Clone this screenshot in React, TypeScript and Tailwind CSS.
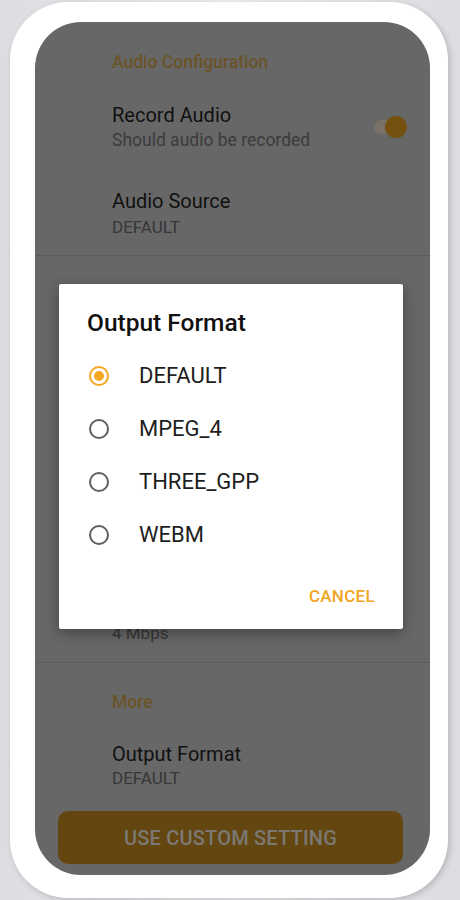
const options = ["DEFAULT", "MPEG_4", "THREE_GPP", "WEBM"];

const Radio = ({ checked }: { checked: boolean }) =>
  checked ? (
    <span className="flex items-center justify-center w-5 h-5 rounded-full border-2 border-[#f5a623]">
      <span className="w-[10px] h-[10px] rounded-full bg-[#f5a623]" />
    </span>
  ) : (
    <span className="w-5 h-5 rounded-full border-2 border-[#5f5f5f]" />
  );

const App = () => {
  return (
    <div className="w-[460px] h-[900px] bg-gradient-to-r from-[#dcdde1] via-[#eceef1] to-[#dcdde1] pt-[2px] pl-[10px] font-['Roboto',sans-serif]">
      <div className="w-[438px] h-[896px] bg-white rounded-[58px] pt-[20px] pl-[25px] pr-[18px] shadow-[2px_2px_6px_rgba(0,0,0,0.18)]">
        <div className="relative w-[395px] h-[853px] bg-[#676767] rounded-[46px] overflow-hidden">
          {/* settings list behind the scrim */}
          <div className="flex flex-col pt-[30px]">
            <p className="pl-[77px] text-[17.5px] leading-[20px] font-medium text-[#6a5427]">
              Audio Configuration
            </p>

            <div className="flex items-center justify-between mt-[31px] pl-[77px] pr-[22px]">
              <div className="flex flex-col">
                <p className="text-[20px] leading-[24px] text-[#111]">Record Audio</p>
                <p className="mt-[2px] text-[17.5px] leading-[22px] text-[#3b3b3b]">
                  Should audio be recorded
                </p>
              </div>
              <svg width="36" height="24" viewBox="0 0 36 24">
                <rect x="2" y="5" width="30" height="14" rx="7" fill="#7a7266" />
                <circle cx="24" cy="12" r="11" fill="#755110" />
              </svg>
            </div>

            <p className="mt-[38px] pl-[77px] text-[20px] leading-[24px] text-[#111]">Audio Source</p>
            <p className="mt-[4px] pl-[77px] text-[17px] leading-[20px] text-[#363636]">DEFAULT</p>
            <div className="mt-[18px] h-px bg-[#5b5b5b]" />

            <div className="h-[367px]" />

            <p className="pl-[77px] text-[17px] leading-[20px] text-[#363636]">4 Mbps</p>
            <div className="mt-[19px] h-px bg-[#5b5b5b]" />

            <p className="mt-[29px] pl-[77px] text-[17.5px] leading-[20px] font-medium text-[#6a5427]">More</p>
            <p className="mt-[30px] pl-[77px] text-[20px] leading-[24px] text-[#111]">Output Format</p>
            <p className="mt-[2px] pl-[77px] text-[17px] leading-[20px] text-[#363636]">DEFAULT</p>

            <button className="mt-[23px] ml-[23px] w-[345px] h-[53px] rounded-[10px] bg-[#644610] text-[20px] font-medium text-[#7c7975] tracking-[0.2px]">
              USE CUSTOM SETTING
            </button>
          </div>

          {/* dialog */}
          <div className="absolute left-[24px] top-[262px] w-[344px] h-[345px] bg-white rounded-[2px] shadow-[0_4px_14px_rgba(0,0,0,0.35)] flex flex-col">
            <h2 className="mt-[25px] pl-[28px] text-[24.5px] leading-[28px] font-medium text-[#111]">
              Output Format
            </h2>
            <ul className="mt-[12px] flex flex-col">
              {options.map((o, i) => (
                <li key={o} className="flex items-center h-[53px] pl-[30px] gap-[30px]">
                  <Radio checked={i === 0} />
                  <span className="text-[22px] text-[#1e1e1e]">{o}</span>
                </li>
              ))}
            </ul>
            <div className="mt-[25px] flex justify-end pr-[28px]">
              <span className="text-[17px] leading-[20px] font-medium text-[#f0a623] tracking-[0.3px]">CANCEL</span>
            </div>
          </div>
        </div>
      </div>
    </div>
  );
};

export default App;
